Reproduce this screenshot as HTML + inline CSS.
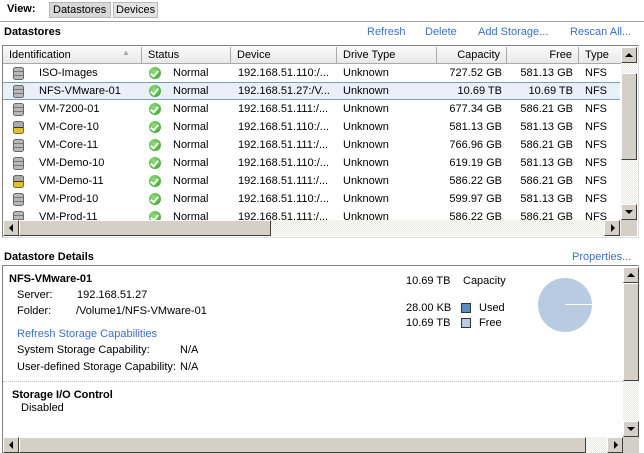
<!DOCTYPE html>
<html><head><style>
*{margin:0;padding:0;box-sizing:border-box}
body{width:644px;height:453px;background:#fff;font-family:"Liberation Sans",sans-serif;font-size:11px;color:#000;position:relative;overflow:hidden}
.a{position:absolute;white-space:nowrap}
.b{font-weight:bold}
.lnk{color:#3c6fc6}
.hd{position:absolute;top:47px;height:17px;background:linear-gradient(#fafafa,#e8e8e8);border-right:1px solid #aaa;border-bottom:1px solid #aaa;padding:2px 6px}
.row{position:absolute;left:3px;width:617px;height:18px}
.row span{position:absolute;top:3px}
.row span.c{right:118px}
.row span.f{right:47px}
.sel{background:#eaf0f8;border-top:1px solid #7a9cc8;border-bottom:1px solid #7a9cc8}
.ok{position:absolute;left:146px;top:3px;width:12px;height:12px;border-radius:50%;background:radial-gradient(circle at 40% 35%,#8fe07a,#2f9a1f)}
.ok:after{content:"";position:absolute;left:3px;top:2px;width:3px;height:6px;border:solid #fff;border-width:0 2px 2px 0;transform:rotate(40deg)}
.db{position:absolute;left:10px;top:3px;width:11px;height:13px;border-radius:3px/2px;background:repeating-linear-gradient(#b8b8b8 0 3px,#777 3px 4px);border:1px solid #666}
.db.w{background:linear-gradient(#aaa 0 5px,#333 5px 6px,#e8c020 6px,#e8c020 100%)}
.sb{position:absolute;background:repeating-conic-gradient(#e8e8e0 0 25%,#fff 0 50%) 0 0/2px 2px}
.btn{position:absolute;background:#d4d0c8;border:1px solid;border-color:#fff #404040 #404040 #fff;width:16px;height:16px}
.thumb{position:absolute;background:#d4d0c8;border:1px solid;border-color:#fff #404040 #404040 #fff}
.tri{position:absolute;width:0;height:0}
</style></head><body>
<div class="a b" style="left:7px;top:3px">View:</div>
<div class="a" style="left:49px;top:2px;width:62px;height:16px;background:#d8d8d8;border:1px solid #b8b8b8;padding:1px 3px">Datastores</div>
<div class="a" style="left:113px;top:2px;width:45px;height:16px;background:#e4e4e4;border:1px solid #b8b8b8;padding:1px 2px">Devices</div>
<div class="a" style="left:0;top:21px;width:644px;height:1px;background:#a0a0a0"></div>
<div class="a b" style="left:4px;top:26px">Datastores</div>
<div class="a lnk" style="left:367px;top:26px">Refresh</div>
<div class="a lnk" style="left:425px;top:26px">Delete</div>
<div class="a lnk" style="left:478px;top:26px">Add Storage...</div>
<div class="a lnk" style="left:570px;top:26px">Rescan All...</div>

<div class="a" style="left:2px;top:45px;width:637px;height:193px;border:1px solid #808080;border-right-color:#ddd;border-bottom-color:#ddd"></div>
<div class="hd" style="left:3px;width:139px">Identification<span style="position:absolute;left:119px;top:1px;color:#aaa;font-size:8px">▲</span></div>
<div class="hd" style="left:142px;width:89px">Status</div>
<div class="hd" style="left:231px;width:106px">Device</div>
<div class="hd" style="left:337px;width:100px">Drive Type</div>
<div class="hd" style="left:437px;width:70px;text-align:right">Capacity</div>
<div class="hd" style="left:507px;width:72px;text-align:right">Free</div>
<div class="hd" style="left:579px;width:43px">Type</div>

<div style="position:absolute;left:0;top:64px;width:620px;height:156px;overflow:hidden">
<div class="row" style="top:0"><div class="db"></div><span style="left:36px">ISO-Images</span><div class="ok"></div><span style="left:170px">Normal</span><span style="left:235px">192.168.51.110:/...</span><span style="left:340px">Unknown</span><span class="c">727.52 GB</span><span class="f">581.13 GB</span><span style="left:582px">NFS</span></div>
<div class="row sel" style="top:18px"><div class="db" style="top:2px"></div><span style="left:36px;top:2px">NFS-VMware-01</span><div class="ok" style="top:2px"></div><span style="left:170px;top:2px">Normal</span><span style="left:235px;top:2px">192.168.51.27:/V...</span><span style="left:340px;top:2px">Unknown</span><span class="c" style="top:2px">10.69 TB</span><span class="f" style="top:2px">10.69 TB</span><span style="left:582px;top:2px">NFS</span></div>
<div class="row" style="top:36px"><div class="db"></div><span style="left:36px">VM-7200-01</span><div class="ok"></div><span style="left:170px">Normal</span><span style="left:235px">192.168.51.111:/...</span><span style="left:340px">Unknown</span><span class="c">677.34 GB</span><span class="f">586.21 GB</span><span style="left:582px">NFS</span></div>
<div class="row" style="top:54px"><div class="db w"></div><span style="left:36px">VM-Core-10</span><div class="ok"></div><span style="left:170px">Normal</span><span style="left:235px">192.168.51.110:/...</span><span style="left:340px">Unknown</span><span class="c">581.13 GB</span><span class="f">581.13 GB</span><span style="left:582px">NFS</span></div>
<div class="row" style="top:72px"><div class="db"></div><span style="left:36px">VM-Core-11</span><div class="ok"></div><span style="left:170px">Normal</span><span style="left:235px">192.168.51.111:/...</span><span style="left:340px">Unknown</span><span class="c">766.96 GB</span><span class="f">586.21 GB</span><span style="left:582px">NFS</span></div>
<div class="row" style="top:90px"><div class="db"></div><span style="left:36px">VM-Demo-10</span><div class="ok"></div><span style="left:170px">Normal</span><span style="left:235px">192.168.51.110:/...</span><span style="left:340px">Unknown</span><span class="c">619.19 GB</span><span class="f">581.13 GB</span><span style="left:582px">NFS</span></div>
<div class="row" style="top:108px"><div class="db w"></div><span style="left:36px">VM-Demo-11</span><div class="ok"></div><span style="left:170px">Normal</span><span style="left:235px">192.168.51.111:/...</span><span style="left:340px">Unknown</span><span class="c">586.22 GB</span><span class="f">586.21 GB</span><span style="left:582px">NFS</span></div>
<div class="row" style="top:126px"><div class="db"></div><span style="left:36px">VM-Prod-10</span><div class="ok"></div><span style="left:170px">Normal</span><span style="left:235px">192.168.51.110:/...</span><span style="left:340px">Unknown</span><span class="c">599.97 GB</span><span class="f">581.13 GB</span><span style="left:582px">NFS</span></div>
<div class="row" style="top:144px"><div class="db"></div><span style="left:36px">VM-Prod-11</span><div class="ok"></div><span style="left:170px">Normal</span><span style="left:235px">192.168.51.111:/...</span><span style="left:340px">Unknown</span><span class="c">586.22 GB</span><span class="f">586.21 GB</span><span style="left:582px">NFS</span></div>
</div>
<div class="sb" style="left:621px;top:47px;width:16px;height:173px"></div>
<div class="btn" style="left:621px;top:47px"><div class="tri" style="left:3px;top:5px;border:4px solid transparent;border-bottom:4px solid #000;border-top:0"></div></div>
<div class="thumb" style="left:621px;top:73px;width:16px;height:87px"></div>
<div class="btn" style="left:621px;top:204px"><div class="tri" style="left:3px;top:5px;border:4px solid transparent;border-top:4px solid #000;border-bottom:0"></div></div>
<div class="sb" style="left:3px;top:220px;width:618px;height:16px"></div>
<div class="btn" style="left:3px;top:220px"><div class="tri" style="left:5px;top:3px;border:4px solid transparent;border-right:4px solid #000;border-left:0"></div></div>
<div class="thumb" style="left:19px;top:220px;width:252px;height:16px"></div>
<div class="btn" style="left:604px;top:220px"><div class="tri" style="left:6px;top:3px;border:4px solid transparent;border-left:4px solid #000;border-right:0"></div></div>
<div class="a" style="left:621px;top:220px;width:16px;height:16px;background:#d4d0c8"></div>

<div class="a b" style="left:4px;top:251px">Datastore Details</div>
<div class="a lnk" style="left:572px;top:251px">Properties...</div>
<div class="a" style="left:2px;top:265px;width:637px;height:188px;border:1px solid #808080;border-right-color:#ddd;border-bottom:none"></div>
<div class="a b" style="left:9px;top:273px">NFS-VMware-01</div>
<div class="a" style="left:17px;top:289px">Server:</div><div class="a" style="left:77px;top:289px">192.168.51.27</div>
<div class="a" style="left:17px;top:305px">Folder:</div><div class="a" style="left:76px;top:305px">/Volume1/NFS-VMware-01</div>
<div class="a lnk" style="left:17px;top:328px">Refresh Storage Capabilities</div>
<div class="a" style="left:17px;top:344px">System Storage Capability:</div><div class="a" style="left:180px;top:344px">N/A</div>
<div class="a" style="left:17px;top:361px">User-defined Storage Capability:</div><div class="a" style="left:180px;top:361px">N/A</div>
<div class="a" style="left:3px;top:381px;width:620px;border-top:1px dotted #bbb"></div>
<div class="a b" style="left:12px;top:389px">Storage I/O Control</div>
<div class="a" style="left:21px;top:402px">Disabled</div>
<div class="a" style="left:406px;top:275px">10.69 TB</div><div class="a" style="left:463px;top:275px">Capacity</div>
<div class="a" style="left:406px;top:302px">28.00 KB</div><div class="a" style="left:461px;top:303px;width:10px;height:10px;background:#5b8cc0;border:1px solid #333"></div><div class="a" style="left:479px;top:302px">Used</div>
<div class="a" style="left:406px;top:317px">10.69 TB</div><div class="a" style="left:461px;top:318px;width:10px;height:10px;background:#b8cbe3;border:1px solid #333"></div><div class="a" style="left:479px;top:317px">Free</div>
<div class="a" style="left:538px;top:278px;width:54px;height:54px;border-radius:50%;background:#b8cbe2"></div>
<div class="a" style="left:565px;top:304px;width:27px;height:1px;background:#fff"></div>
<div class="sb" style="left:623px;top:267px;width:16px;height:170px"></div>
<div class="btn" style="left:623px;top:267px"><div class="tri" style="left:3px;top:5px;border:4px solid transparent;border-bottom:4px solid #000;border-top:0"></div></div>
<div class="thumb" style="left:623px;top:283px;width:16px;height:98px"></div>
<div class="btn" style="left:623px;top:421px"><div class="tri" style="left:3px;top:5px;border:4px solid transparent;border-top:4px solid #000;border-bottom:0"></div></div>
<div class="sb" style="left:3px;top:437px;width:620px;height:16px"></div>
<div class="btn" style="left:3px;top:437px"><div class="tri" style="left:5px;top:3px;border:4px solid transparent;border-right:4px solid #000;border-left:0"></div></div>
<div class="thumb" style="left:19px;top:437px;width:567px;height:16px"></div>
<div class="btn" style="left:607px;top:437px"><div class="tri" style="left:6px;top:3px;border:4px solid transparent;border-left:4px solid #000;border-right:0"></div></div>
<div class="a" style="left:623px;top:437px;width:16px;height:16px;background:#d4d0c8"></div>
</body></html>
